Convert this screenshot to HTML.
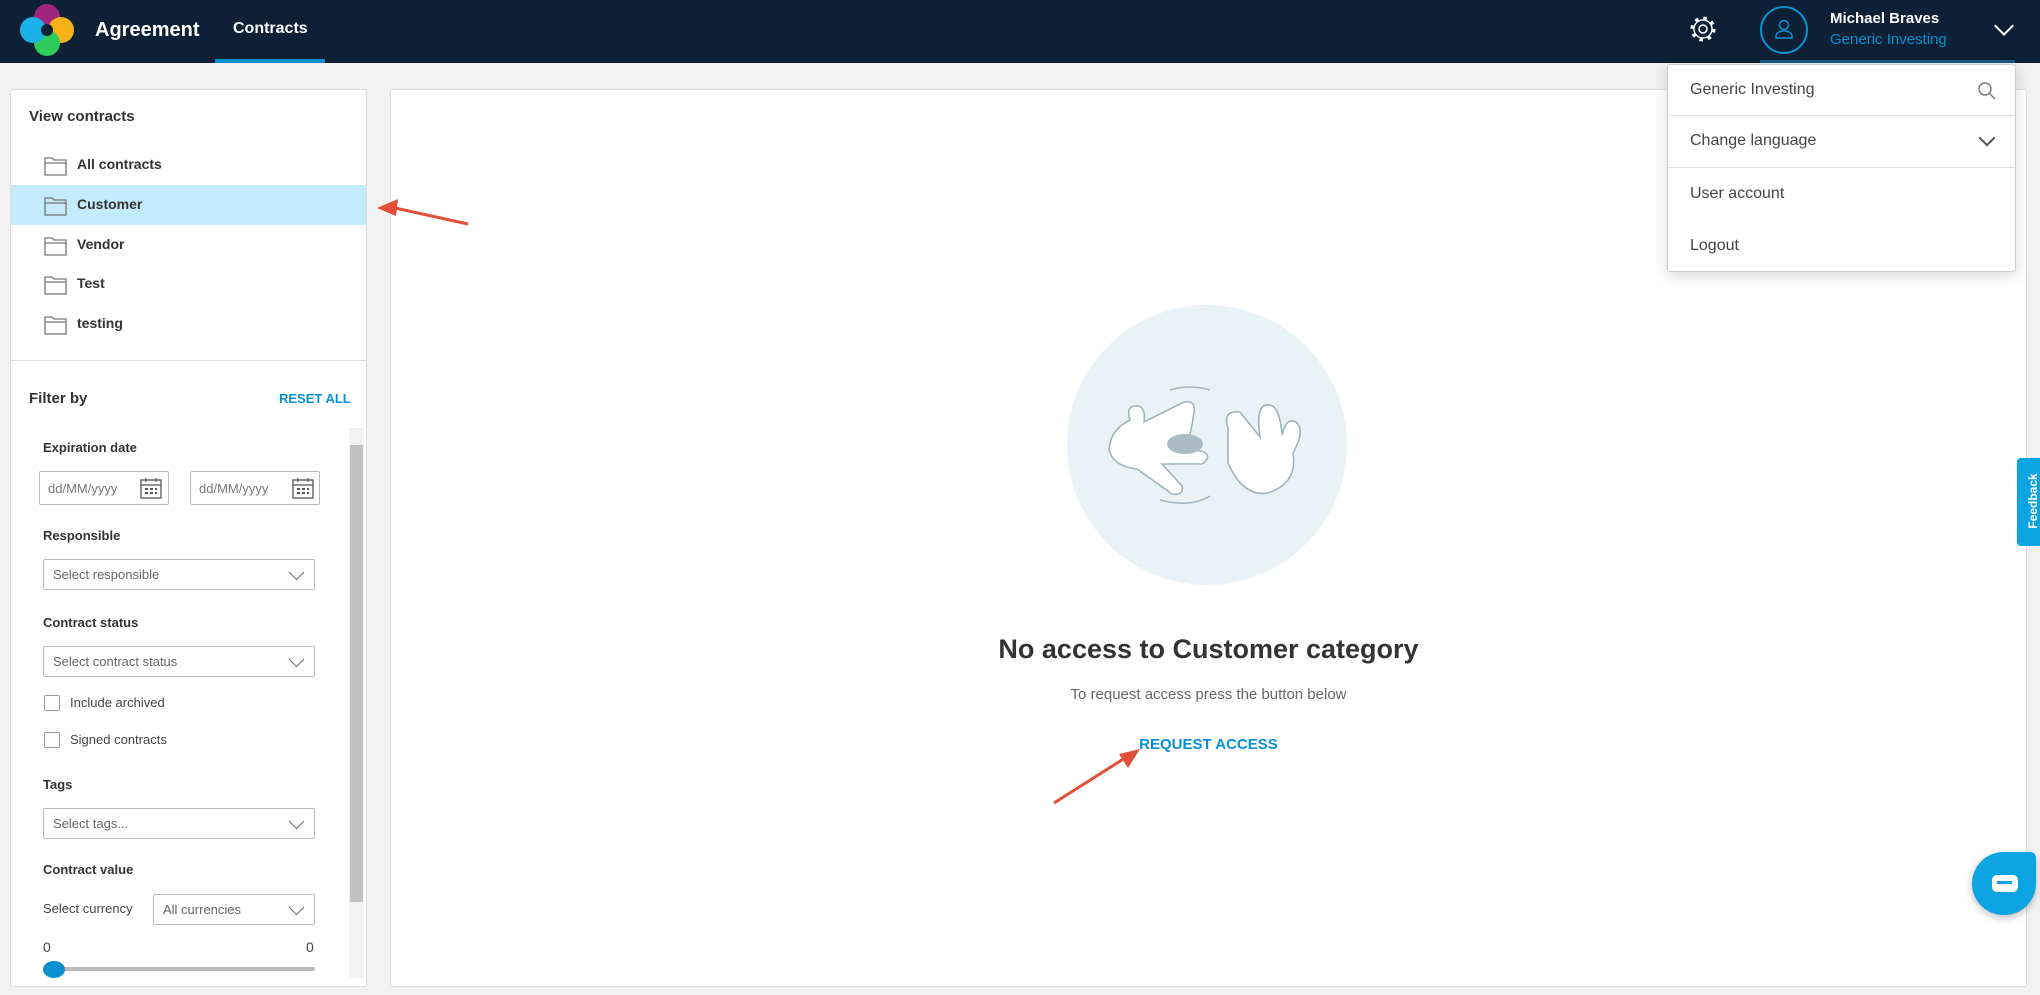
<!DOCTYPE html>
<html><head><meta charset="utf-8"><style>
*{box-sizing:border-box;margin:0;padding:0}
body{width:2040px;height:995px;overflow:hidden;background:#f1f1f1;font-family:"Liberation Sans",sans-serif;color:#333;position:relative}
.abs{position:absolute}
.hdr{left:0;top:0;width:2040px;height:63px;background:#0d2035}
.panel{background:#fff;border:1px solid #ddd;border-radius:3px}
.it{position:absolute;left:0;width:355px;height:40px;font-size:14px;font-weight:bold;color:#333}
.it svg{position:absolute;left:33px;top:11px}
.it span{position:absolute;left:66px;top:11px}
.lbl{position:absolute;left:43px;font-size:13px;font-weight:bold;color:#333}
.sel{position:absolute;left:43px;width:272px;height:31px;border:1px solid #bbb;border-radius:2px;font-size:13px;color:#666;padding:7px 9px}
.sel:after{content:"";position:absolute;right:12px;top:7px;width:10px;height:10px;border-right:1.5px solid #666;border-bottom:1.5px solid #666;transform:rotate(45deg)}
.dt{position:absolute;top:471px;width:130px;height:34px;border:1px solid #bbb;border-radius:2px;font-size:13px;color:#777;padding:9px 8px}
.cb{position:absolute;left:44px;width:16px;height:16px;border:1px solid #999;border-radius:2px}
.ctext{position:absolute;left:70px;font-size:13px;color:#444}
.dd{left:1667px;top:64px;width:349px;height:208px;background:#fff;border:1px solid #ccc;border-radius:3px;box-shadow:0 4px 14px rgba(0,0,0,.15)}
.dd div{position:absolute;left:22px;font-size:16px;color:#444}
</style></head><body>
<div class="abs hdr"></div>
<svg class="abs" style="left:18px;top:2px" width="58" height="56" viewBox="0 0 58 56">
<circle cx="29" cy="15" r="13" fill="#a0267d"/>
<circle cx="43" cy="28" r="13" fill="#f5b316"/>
<circle cx="29" cy="41" r="13" fill="#2fcc5a"/>
<circle cx="15" cy="28" r="13" fill="#1ab0e8"/>
<circle cx="29" cy="28" r="6" fill="#0d2035"/>
</svg>
<div class="abs" style="left:95px;top:19px;color:#fff;font-size:20px;font-weight:bold">Agreement</div>
<div class="abs" style="left:233px;top:20px;color:#fff;font-size:16px;font-weight:bold">Contracts</div>
<div class="abs" style="left:215px;top:59px;width:110px;height:4px;background:#0a8fd0"></div>
<svg class="abs" style="left:1689px;top:15px" width="28" height="28" viewBox="0 0 28 28" fill="none" stroke="#fff">
<circle cx="14" cy="14" r="9" stroke-width="1.5"/>
<circle cx="14" cy="14" r="10.5" stroke-width="4" stroke-dasharray="3.3 4.95"/>
<circle cx="14" cy="14" r="4" stroke-width="1.5"/>
<circle cx="14" cy="14" r="7.2" stroke="#0d2035" stroke-width="2"/>
</svg>
<div class="abs" style="left:1760px;top:6px;width:48px;height:48px;border:2px solid #0a8fd0;border-radius:50%"></div>
<svg class="abs" style="left:1772px;top:17px" width="24" height="24" viewBox="0 0 24 24" fill="none" stroke="#0a8fd0" stroke-width="1.6"><circle cx="12" cy="8" r="4.5"/><path d="M4 21v-2c0-3 3-5 8-5s8 2 8 5v2z"/></svg>
<div class="abs" style="left:1830px;top:10px;color:#fff;font-size:15px;font-weight:bold">Michael Braves</div>
<div class="abs" style="left:1830px;top:31px;color:#0a8fd0;font-size:15px">Generic Investing</div>
<div class="abs" style="left:1997px;top:19px;width:14px;height:14px;border-right:2px solid #fff;border-bottom:2px solid #fff;transform:rotate(45deg)"></div>
<div class="abs" style="left:1760px;top:60px;width:255px;height:3px;background:#155a80"></div>

<div class="abs panel" style="left:10px;top:89px;width:357px;height:898px"></div>
<div class="abs" style="left:29px;top:108px;font-size:15px;font-weight:bold">View contracts</div>
<div class="abs" style="left:11px;top:145px">
<div class="it" style="top:0"><svg width="23" height="20" viewBox="0 0 23 20" fill="none" stroke="#777" stroke-width="1.3"><path d="M1 2h7l2 2h12v15H1z M1 7h21"/></svg><span>All contracts</span></div>
<div class="it" style="top:40px;background:#c3ebfb"><svg width="23" height="20" viewBox="0 0 23 20" fill="none" stroke="#777" stroke-width="1.3"><path d="M1 2h7l2 2h12v15H1z M1 7h21"/></svg><span>Customer</span></div>
<div class="it" style="top:80px"><svg width="23" height="20" viewBox="0 0 23 20" fill="none" stroke="#777" stroke-width="1.3"><path d="M1 2h7l2 2h12v15H1z M1 7h21"/></svg><span>Vendor</span></div>
<div class="it" style="top:119px"><svg width="23" height="20" viewBox="0 0 23 20" fill="none" stroke="#777" stroke-width="1.3"><path d="M1 2h7l2 2h12v15H1z M1 7h21"/></svg><span>Test</span></div>
<div class="it" style="top:159px"><svg width="23" height="20" viewBox="0 0 23 20" fill="none" stroke="#777" stroke-width="1.3"><path d="M1 2h7l2 2h12v15H1z M1 7h21"/></svg><span>testing</span></div>
</div>
<div class="abs" style="left:11px;top:360px;width:355px;height:1px;background:#ddd"></div>
<div class="abs" style="left:29px;top:390px;font-size:15px;font-weight:bold">Filter by</div>
<div class="abs" style="left:279px;top:391px;font-size:13px;font-weight:bold;color:#0a8fd0">RESET ALL</div>
<div class="abs" style="left:349px;top:428px;width:15px;height:550px;background:#f1f1f1"></div>
<div class="abs" style="left:350px;top:445px;width:13px;height:457px;background:#c1c1c1"></div>
<div class="lbl" style="top:440px">Expiration date</div>
<div class="dt" style="left:39px">dd/MM/yyyy</div>
<div class="dt" style="left:190px">dd/MM/yyyy</div>
<svg class="abs" style="left:140px;top:477px" width="22" height="22" viewBox="0 0 22 22" fill="none" stroke="#555" stroke-width="1.3"><rect x="1" y="3" width="20" height="18"/><path d="M1 8h20M6 1v4M16 1v4"/><path d="M5 12h3M10 12h3M15 12h2M5 16h3M10 16h3M15 16h2" stroke-width="2"/></svg>
<svg class="abs" style="left:292px;top:477px" width="22" height="22" viewBox="0 0 22 22" fill="none" stroke="#555" stroke-width="1.3"><rect x="1" y="3" width="20" height="18"/><path d="M1 8h20M6 1v4M16 1v4"/><path d="M5 12h3M10 12h3M15 12h2M5 16h3M10 16h3M15 16h2" stroke-width="2"/></svg>
<div class="lbl" style="top:528px">Responsible</div>
<div class="sel" style="top:559px">Select responsible</div>
<div class="lbl" style="top:615px">Contract status</div>
<div class="sel" style="top:646px">Select contract status</div>
<div class="cb" style="top:695px"></div><div class="ctext" style="top:695px">Include archived</div>
<div class="cb" style="top:732px"></div><div class="ctext" style="top:732px">Signed contracts</div>
<div class="lbl" style="top:777px">Tags</div>
<div class="sel" style="top:808px">Select tags...</div>
<div class="lbl" style="top:862px">Contract value</div>
<div class="ctext" style="left:43px;top:901px">Select currency</div>
<div class="sel" style="left:153px;width:162px;top:894px">All currencies</div>
<div class="ctext" style="left:43px;top:939px;font-size:14px">0</div>
<div class="ctext" style="left:306px;top:939px;font-size:14px">0</div>
<div class="abs" style="left:50px;top:967px;width:265px;height:4px;background:#bbb;border-radius:2px"></div>
<div class="abs" style="left:43px;top:961px;width:22px;height:17px;background:#0a8fd0;border-radius:50%"></div>

<div class="abs panel" style="left:390px;top:89px;width:1637px;height:898px"></div>
<div class="abs" style="left:1067px;top:305px;width:280px;height:280px;border-radius:50%;background:#e9f3f6"></div>
<svg class="abs" style="left:1100px;top:380px" width="220" height="130" viewBox="0 0 220 130" fill="#fff" stroke="#9fb4bf" stroke-width="1.6">
<path d="M70 10 q20-6 40 0" fill="none"/>
<path d="M60 120 q30 8 50 -4" fill="none"/>
<path d="M30 40 q-5-15 8-14 q8 2 6 16 l40-20 q12-2 10 10 q-4 30 -10 35 l20 5 q8 5 -2 12 l-40 0 l20 22 q2 10 -10 8 l-35 -25 q-25 -3 -28 -20 q2 -20 21 -29z"/>
<ellipse cx="85" cy="64" rx="18" ry="10" fill="#a9bcc6" stroke="none"/>
<path d="M128 48 q-6-18 12-16 l20 25 q-5-35 10-32 q10 2 12 30 q5-20 15-12 q8 8-4 30 q5 30-25 40 q-25 4-40-30z"/>
</svg>
<div class="abs" style="left:390px;top:634px;width:1637px;text-align:center;font-size:27px;font-weight:bold;color:#333">No access to Customer category</div>
<div class="abs" style="left:390px;top:686px;width:1637px;text-align:center;font-size:15px;color:#666">To request access press the button below</div>
<div class="abs" style="left:390px;top:736px;width:1637px;text-align:center;font-size:15px;font-weight:bold;color:#0a8fd0">REQUEST ACCESS</div>

<svg class="abs" style="left:0;top:0" width="2040" height="995">
<path d="M468 224 L395 208" stroke="#e0503a" stroke-width="3"/><polygon points="377,208 398,199 396,216" fill="#e0503a"/>
<path d="M1054 803 L1125 758" stroke="#e0503a" stroke-width="3"/><polygon points="1140,749 1128,768 1119,754" fill="#e0503a"/>
</svg>

<div class="abs dd">
<div style="top:16px">Generic Investing</div>
<svg style="position:absolute;left:309px;top:16px" width="20" height="20" viewBox="0 0 20 20" fill="none" stroke="#777" stroke-width="1.4"><circle cx="8" cy="8" r="6"/><path d="M12.5 12.5L18 18"/></svg>
<span style="position:absolute;left:0;top:50px;width:347px;height:1px;background:#ddd"></span>
<div style="top:67px">Change language</div>
<span style="position:absolute;left:313px;top:67px;width:12px;height:12px;border-right:2px solid #555;border-bottom:2px solid #555;transform:rotate(45deg)"></span>
<span style="position:absolute;left:0;top:102px;width:347px;height:1px;background:#ddd"></span>
<div style="top:120px">User account</div>
<div style="top:172px">Logout</div>
</div>

<div class="abs" style="left:2017px;top:458px;width:30px;height:88px;background:#0ca3e3;border-radius:4px"></div>
<div class="abs" style="left:1998px;top:494px;transform:rotate(-90deg);color:#fff;font-size:12px;font-weight:bold;width:70px;text-align:center">Feedback</div>
<div class="abs" style="left:1972px;top:852px;width:64px;height:63px;background:#0ca3e3;border-radius:32px 6px 32px 32px;box-shadow:0 3px 8px rgba(0,0,0,.25)"></div>
<div class="abs" style="left:1992px;top:875px;width:26px;height:17px;background:#fff;border-radius:5px"></div>
<div class="abs" style="left:1997px;top:881px;width:15px;height:3px;background:#0ca3e3"></div>
</body></html>
